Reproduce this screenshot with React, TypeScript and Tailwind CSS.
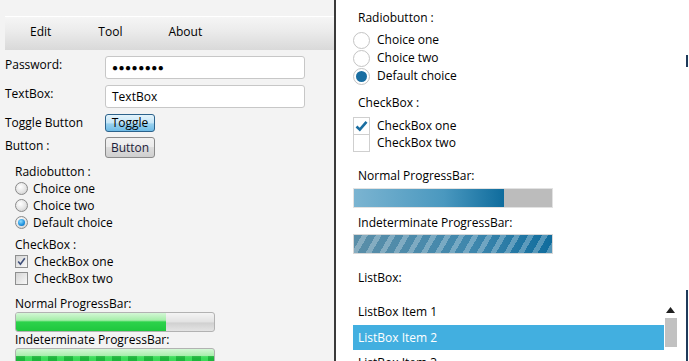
import React from "react";

const font = { fontFamily: '"Open Sans", "Noto Sans", sans-serif' };

function ClassicRadio({ checked }: { checked?: boolean }) {
  return (
    <span className="relative flex h-[13px] w-[13px] shrink-0 items-center justify-center rounded-full border border-[#8a8a8a] bg-[radial-gradient(circle_at_40%_35%,#ffffff,#e4e4e4_55%,#c4c4c4)]">
      {checked && (
        <span className="h-[7px] w-[7px] rounded-full bg-[radial-gradient(circle_at_40%_35%,#8fdcff,#1b8fdc_60%,#0b5aa6)]" />
      )}
    </span>
  );
}

function ClassicCheck({ checked }: { checked?: boolean }) {
  return (
    <span className="flex h-[13px] w-[13px] shrink-0 items-center justify-center border border-[#8e8f8f] bg-[linear-gradient(135deg,#d4d4d4,#f8f8f8)]">
      {checked && (
        <svg width="9" height="9" viewBox="0 0 9 9">
          <path d="M1.2 4.6 L3.4 7.2 L7.8 1.2" fill="none" stroke="#3e4f7a" strokeWidth="1.6" />
        </svg>
      )}
    </span>
  );
}

function ModernRadio({ checked }: { checked?: boolean }) {
  return (
    <span className="flex h-[17px] w-[17px] shrink-0 items-center justify-center rounded-full border border-[#c4c4c4] bg-white">
      {checked && <span className="h-[11px] w-[11px] rounded-full bg-[#1a6ea1]" />}
    </span>
  );
}

function ModernCheck({ checked }: { checked?: boolean }) {
  return (
    <span className="flex h-[18px] w-[17px] shrink-0 items-center justify-center border border-[#cfcfcf] bg-white">
      {checked && (
        <svg width="13" height="12" viewBox="0 0 13 12">
          <path d="M1.5 6.5 L4.8 9.6 L11.5 1.8" fill="none" stroke="#1a6ea1" strokeWidth="2.6" />
        </svg>
      )}
    </span>
  );
}

function LeftPanel() {
  return (
    <div className="flex h-[361px] w-[334px] shrink-0 flex-col bg-[#f3f3f3] text-[12px] text-black [&>*]:shrink-0">
      <div className="h-[16px]" />
      <div className="ml-[5px] flex h-[34px] items-center border-t border-white bg-[linear-gradient(#f5f5f5,#ececec_40%,#d9d9d9)] pb-[4px] text-[12px]">
        <span className="ml-[25px]">Edit</span>
        <span className="ml-[47px]">Tool</span>
        <span className="ml-[46px]">About</span>
      </div>
      <div className="mt-[6px] grid grid-cols-[100px_200px] gap-y-[6px] pl-[5px]">
        <span className="leading-[18px]">Password:</span>
        <div className="flex h-[23px] items-center rounded-[3px] border border-[#c7c7c7] bg-white pl-[6px] text-[10px] tracking-[0.5px]">
          ●●●●●●●●
        </div>
        <span className="leading-[18px]">TextBox:</span>
        <div className="flex h-[23px] items-center rounded-[3px] border border-[#c7c7c7] bg-white pl-[6px]">TextBox</div>
        <span className="leading-[18px]">Toggle Button</span>
        <div>
          <div className="flex h-[18px] w-[50px] items-center justify-center rounded-[3px] border border-[#2c628b] bg-[linear-gradient(#e4f4fc,#c4e5f6_50%,#98d1ef_55%,#6fbbe6)] leading-none">
            Toggle
          </div>
        </div>
      </div>
      <div className="mt-[5px] grid grid-cols-[100px_200px] pl-[5px]">
        <span className="leading-[18px]">Button :</span>
        <div>
          <div className="flex h-[21px] w-[50px] items-center justify-center rounded-[3px] border border-[#8a8a8a] bg-[linear-gradient(#f2f2f2,#ebebeb_50%,#dddddd_50%,#cfcfcf)] leading-none text-[#1c1c3a]">
            Button
          </div>
        </div>
      </div>
      <div className="mt-[5px] flex flex-col pl-[15px] leading-[17px] [&>*]:shrink-0">
        <span>Radiobutton :</span>
        {[
          ["Choice one", false],
          ["Choice two", false],
          ["Default choice", true],
        ].map(([t, c]) => (
          <div key={t as string} className="flex h-[17px] items-center gap-[5px]">
            <ClassicRadio checked={c as boolean} />
            <span>{t as string}</span>
          </div>
        ))}
        <span className="mt-[5px]">CheckBox :</span>
        {[
          ["CheckBox one", true],
          ["CheckBox two", false],
        ].map(([t, c]) => (
          <div key={t as string} className="flex h-[17px] items-center gap-[6px]">
            <ClassicCheck checked={c as boolean} />
            <span>{t as string}</span>
          </div>
        ))}
        <span className="mt-[9px] leading-[16px]">Normal ProgressBar:</span>
        <div className="relative h-[20px] w-[200px] overflow-hidden rounded-[3px] border border-[#b2b2b2] bg-[linear-gradient(#f4f4f4,#e2e2e2_50%,#d0d0d0_55%,#e4e4e4)]">
          <div className="h-full w-[150px] bg-[linear-gradient(#d4f7d6,#a5eea9_40%,#2dd24b_50%,#1fc73e)]" />
        </div>
        <span className="leading-[16px]">Indeterminate ProgressBar:</span>
        <div className="relative h-[20px] w-[200px] overflow-hidden rounded-[3px] border border-[#b2b2b2] bg-[linear-gradient(#d4f7d6,#a5eea9_40%,#2dd24b_50%,#1fc73e)]">
          <div className="absolute left-0 right-0 top-[7px] h-[6px] bg-[image:repeating-linear-gradient(90deg,#18b037_0px,#18b037_9px,#3ede5c_9px,#3ede5c_16px)] opacity-80" />
        </div>
      </div>
    </div>
  );
}

function RightPanel() {
  return (
    <div className="relative flex h-[361px] flex-1 flex-col bg-white pl-[17px] text-[12px] text-black [&>*]:shrink-0">
      <span className="ml-[5px] mt-[10px] leading-[16px]">Radiobutton :</span>
      <div className="mt-[5px] flex flex-col">
        {[
          ["Choice one", false],
          ["Choice two", false],
          ["Default choice", true],
        ].map(([t, c]) => (
          <div key={t as string} className="flex h-[18px] items-center gap-[7px]">
            <ModernRadio checked={c as boolean} />
            <span>{t as string}</span>
          </div>
        ))}
      </div>
      <span className="ml-[5px] mt-[10px] leading-[16px]">CheckBox :</span>
      <div className="mt-[6px] flex flex-col">
        <div className="flex items-center gap-[7px]">
          <ModernCheck checked />
          <span>CheckBox one</span>
        </div>
        <div className="-mt-px flex items-center gap-[7px]">
          <ModernCheck />
          <span>CheckBox two</span>
        </div>
      </div>
      <span className="ml-[5px] mt-[16px] leading-[16px]">Normal ProgressBar:</span>
      <div className="mt-[4px] flex h-[20px] w-[200px] border border-[#e2e2e2] bg-[#bcbcbc]">
        <div className="h-full w-[150px] bg-[linear-gradient(90deg,#7bb4d1,#4a98bf_60%,#0f6c9d)]" />
      </div>
      <span className="ml-[5px] mt-[7px] leading-[16px]">Indeterminate ProgressBar:</span>
      <div className="mt-[3px] h-[20px] w-[200px] border border-[#d8d8d8] bg-[image:repeating-linear-gradient(120deg,rgba(255,255,255,0)_0px,rgba(255,255,255,0)_7px,rgba(255,255,255,0.28)_7px,rgba(255,255,255,0.28)_12px),linear-gradient(90deg,#5a8ea8,#3f87ad_60%,#0f6c9d)]" />
      <span className="ml-[5px] mt-[16px] leading-[16px]">ListBox:</span>
      <div className="mt-[13px] flex w-[324px]">
        <div className="flex flex-1 flex-col">
          <div className="flex h-[26px] items-center pl-[5px]">ListBox Item 1</div>
          <div className="flex h-[25px] items-center bg-[#42afe0] pl-[5px] text-white">ListBox Item 2</div>
          <div className="flex h-[26px] items-center pl-[5px]">ListBox Item 3</div>
        </div>
        <div className="flex w-[13px] flex-col items-center">
          <svg width="9" height="6" viewBox="0 0 9 6" className="mt-[8px]">
            <path d="M0 6 L4.5 0 L9 6 Z" fill="#202020" />
          </svg>
          <div className="mt-[5px] h-[29px] w-[12px] bg-[#c1c1c1]" />
        </div>
      </div>
      <div className="absolute right-[1px] top-[55px] h-[12px] w-[2px] bg-[#1f3a5a]" />
      <div className="absolute bottom-0 right-[1px] top-[290px] w-[2px] bg-[#1f3a5a]" />
    </div>
  );
}

export default function App() {
  return (
    <div className="flex h-[361px] w-[689px] overflow-hidden" style={font}>
      <LeftPanel />
      <div className="h-[361px] w-[2px] shrink-0 bg-[#3a3a3a]" />
      <RightPanel />
    </div>
  );
}
